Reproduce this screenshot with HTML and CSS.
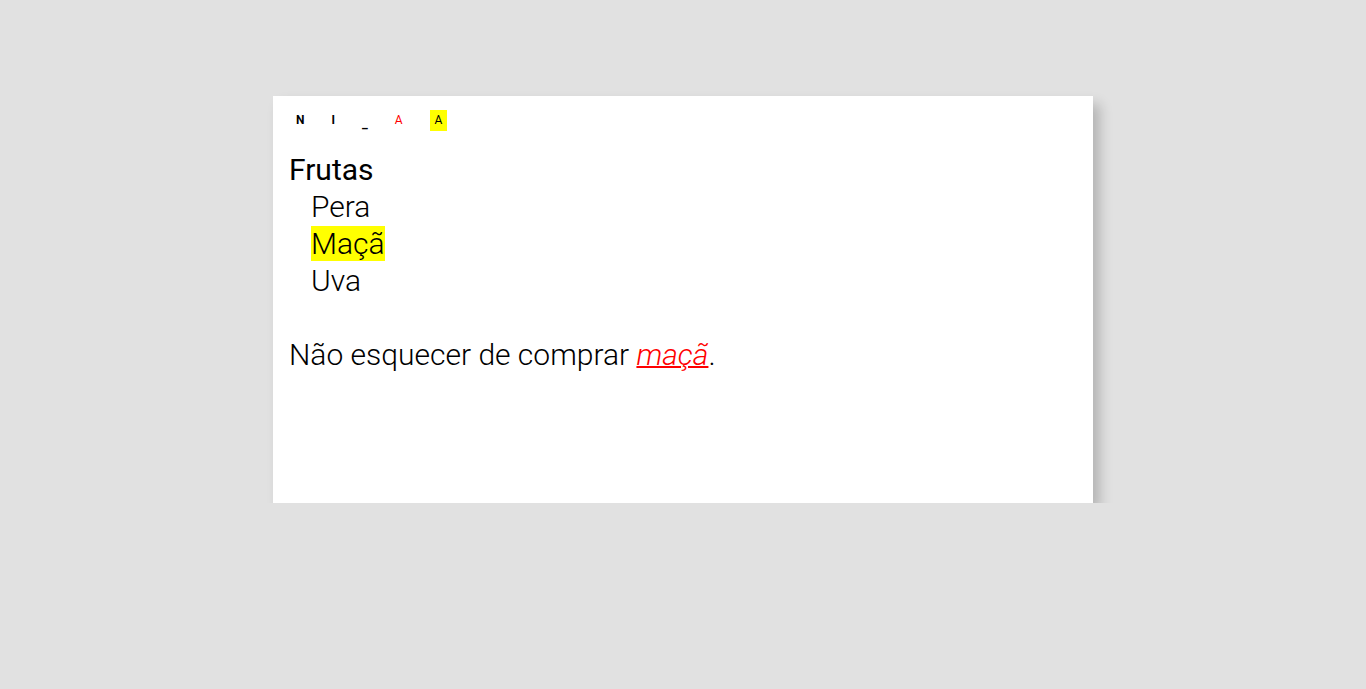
FILE: index.html
```html
<!DOCTYPE html>
<html lang="pt">
<head>
<meta charset="utf-8">
<title>Editor</title>
<link rel="stylesheet" href="styles.css">
</head>
<body>
<div class="card">
  <div class="toolbar">
    <button class="btn btn-bold">N</button>
    <button class="btn btn-italic">I</button>
    <button class="btn btn-under">_</button>
    <button class="btn btn-red">A</button>
    <button class="btn btn-hl">A</button>
  </div>
  <div class="editor">
    <div class="title">Frutas</div>
    <div class="item">Pera</div>
    <div class="item"><span class="hl">Maçã</span></div>
    <div class="item">Uva</div>
    <div class="blank"><br></div>
    <div class="para">Não esquecer de comprar <em class="mark">maçã</em>.</div>
  </div>
</div>
</body>
</html>
```
FILE: styles.css
```css
html, body {
  margin: 0;
  padding: 0;
  background: #e1e1e1;
  font-family: Roboto, "Liberation Sans", sans-serif;
}
.card {
  width: 820px;
  height: 407px;
  margin: 96px auto 0;
  background: #fff;
  box-shadow: 7px 8px 12px rgba(0, 0, 0, 0.2);
  box-sizing: border-box;
  padding: 14px 17px 0 16px;
}
.toolbar {
  display: flex;
  align-items: center;
  gap: 17px;
  height: 21px;
  padding-left: 2px;
}
.btn {
  border: 0;
  background: transparent;
  font-family: Roboto, "Liberation Sans", sans-serif;
  font-size: 12px;
  color: #000;
  padding: 0 5px;
  height: 21px;
  line-height: 21px;
  cursor: pointer;
}
.btn-bold { font-weight: 700; }
.btn-italic { font-weight: 700; }
.btn-under { font-weight: 700; font-size: 13px; padding-top: 3px; }
.btn-red { color: #f00; }
.btn-hl { background: #ff0; margin-left: 5px; }
.editor {
  margin-top: 20px;
  font-size: 30px;
  line-height: 37px;
  font-weight: 300;
  color: #000;
}
.title { font-weight: 400; }
.item { padding-left: 22px; }
.hl { background: #ff0; }
.mark {
  color: #f00;
  text-decoration: underline;
  text-decoration-thickness: 2px;
}
```
